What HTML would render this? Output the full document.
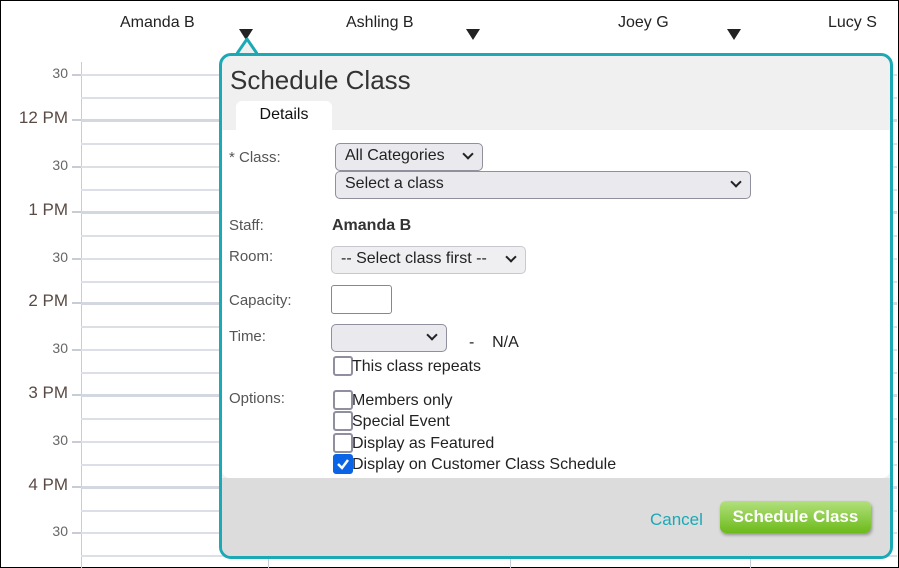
<!DOCTYPE html><html><head><style>
body{margin:0;width:899px;height:568px;overflow:hidden;font-family:"Liberation Sans",sans-serif;background:#fff;position:relative}
.a{position:absolute}
.frame{left:0;top:0;width:897px;height:566px;border:1px solid #000}
.hd{top:14px;font-size:16px;color:#222}
.tri{width:0;height:0;border-left:7px solid transparent;border-right:7px solid transparent;border-top:11px solid #222;top:29px}
.hl{left:81px;width:816px;height:2px;background:#dcdfe6}
.hh{height:3px;background:#d3d7df}
.tk{left:72px;width:9px;height:2px;background:#c8ccd5}
.tl{font-size:14px;color:#666;width:68px;text-align:right;left:0}
.tb{font-size:17px;color:#5a4a45}
.vl{top:62px;width:1px;height:506px;background:#c8ccd5}
.modal{left:219px;top:53px;width:668px;height:500px;border:3px solid #1ba9b6;border-radius:12px;background:#f0f0f0;overflow:hidden}
.lab{font-size:15px;color:#555;left:7px}
.sel{background:#e9e9ee;border:1px solid #8f8f9d;border-radius:5px;font-size:16px;color:#222;box-sizing:border-box;padding:3px 9px}
.chev{position:absolute;right:10px;top:6px;width:6px;height:6px;border-right:2px solid #222;border-bottom:2px solid #222;transform:rotate(45deg)}
.cb{width:16px;height:16px;border:2px solid #8f8f9d;border-radius:3px;background:#fff;left:111px}
.ct{font-size:16px;color:#222;left:130px}
</style></head><body>
<div class="a frame"></div>
<div class="a hd" style="left:120px">Amanda B</div>
<div class="a hd" style="left:346px">Ashling B</div>
<div class="a hd" style="left:618px">Joey G</div>
<div class="a hd" style="left:828px">Lucy S</div>
<div class="a tri" style="left:239px"></div>
<div class="a tri" style="left:466px"></div>
<div class="a tri" style="left:727px"></div>
<div class="a vl" style="left:81px"></div>
<div class="a vl" style="left:268px"></div>
<div class="a vl" style="left:510px"></div>
<div class="a vl" style="left:750px"></div>
<div class="a hl" style="top:74px"></div><div class="a tk" style="top:74px"></div><div class="a tl" style="top:65px">30</div>
<div class="a hl" style="top:97px"></div>
<div class="a hl hh" style="top:119px"></div><div class="a tk" style="top:119px"></div><div class="a tl tb" style="top:108px">12 PM</div>
<div class="a hl" style="top:143px"></div>
<div class="a hl" style="top:166px"></div><div class="a tk" style="top:166px"></div><div class="a tl" style="top:157px">30</div>
<div class="a hl" style="top:189px"></div>
<div class="a hl hh" style="top:211px"></div><div class="a tk" style="top:211px"></div><div class="a tl tb" style="top:200px">1 PM</div>
<div class="a hl" style="top:235px"></div>
<div class="a hl" style="top:258px"></div><div class="a tk" style="top:258px"></div><div class="a tl" style="top:249px">30</div>
<div class="a hl" style="top:281px"></div>
<div class="a hl hh" style="top:302px"></div><div class="a tk" style="top:302px"></div><div class="a tl tb" style="top:291px">2 PM</div>
<div class="a hl" style="top:326px"></div>
<div class="a hl" style="top:349px"></div><div class="a tk" style="top:349px"></div><div class="a tl" style="top:340px">30</div>
<div class="a hl" style="top:372px"></div>
<div class="a hl hh" style="top:394px"></div><div class="a tk" style="top:394px"></div><div class="a tl tb" style="top:383px">3 PM</div>
<div class="a hl" style="top:418px"></div>
<div class="a hl" style="top:441px"></div><div class="a tk" style="top:441px"></div><div class="a tl" style="top:432px">30</div>
<div class="a hl" style="top:464px"></div>
<div class="a hl hh" style="top:486px"></div><div class="a tk" style="top:486px"></div><div class="a tl tb" style="top:475px">4 PM</div>
<div class="a hl" style="top:510px"></div>
<div class="a hl" style="top:532px"></div><div class="a tk" style="top:532px"></div><div class="a tl" style="top:523px">30</div>
<div class="a hl" style="top:555px"></div>
<svg class="a" style="left:236px;top:38px" width="22" height="18"><path d="M0 17 L11 1 L22 17" fill="#f0f0f0" stroke="#1ba9b6" stroke-width="3"/></svg>
<div class="a modal">
 <div class="a" style="left:8px;top:9px;font-size:26px;color:#333">Schedule Class</div>
 <div class="a" style="left:14px;top:45px;width:96px;height:30px;background:#fff;border-radius:6px 6px 0 0;font-size:16px;color:#111;text-align:center;line-height:28px">Details</div>
 <div class="a" style="left:0;top:74px;width:668px;height:348px;background:#fff;border-radius:0 0 8px 8px"></div>
 <div class="a" style="left:0;top:422px;width:668px;height:78px;background:#dcdcdc"></div>
 <div class="a lab" style="top:93px">* Class:</div>
 <div class="a sel" style="left:113px;top:87px;width:148px;height:28px">All Categories<span class="chev"></span></div>
 <div class="a sel" style="left:113px;top:115px;width:416px;height:28px">Select a class<span class="chev"></span></div>
 <div class="a lab" style="top:161px">Staff:</div>
 <div class="a" style="left:110px;top:161px;font-size:16px;font-weight:bold;color:#333">Amanda B</div>
 <div class="a lab" style="top:192px">Room:</div>
 <div class="a sel" style="left:109px;top:190px;width:195px;height:28px;background:#efeff2;border-color:#c8c8d0">-- Select class first --<span class="chev"></span></div>
 <div class="a lab" style="top:236px">Capacity:</div>
 <div class="a" style="left:109px;top:229px;width:59px;height:27px;border:1px solid #888;border-radius:3px;background:#fff"></div>
 <div class="a lab" style="top:272px">Time:</div>
 <div class="a sel" style="left:109px;top:268px;width:116px;height:28px"><span class="chev"></span></div>
 <div class="a" style="left:247px;top:278px;font-size:16px;color:#222">-&nbsp;&nbsp;&nbsp;&nbsp;N/A</div>
 <div class="a cb" style="top:300px"></div><div class="a ct" style="top:302px">This class repeats</div>
 <div class="a lab" style="top:334px">Options:</div>
 <div class="a cb" style="top:334px"></div><div class="a ct" style="top:336px">Members only</div>
 <div class="a cb" style="top:355px"></div><div class="a ct" style="top:357px">Special Event</div>
 <div class="a cb" style="top:377px"></div><div class="a ct" style="top:379px">Display as Featured</div>
 <div class="a cb" style="top:398px;background:#0b63e5;border-color:#0b63e5"><svg width="16" height="16" style="position:absolute;left:0;top:0"><path d="M3 8 L7 12 L13 4" fill="none" stroke="#fff" stroke-width="2.5"/></svg></div><div class="a ct" style="top:400px">Display on Customer Class Schedule</div>
 <div class="a" style="left:428px;top:454px;font-size:17px;color:#1ba9b6">Cancel</div>
 <div class="a" style="left:498px;top:445px;width:151px;height:32px;border-radius:6px;background:linear-gradient(#b2e07d,#6cba1a);box-shadow:1px 2px 3px rgba(0,0,0,.35);color:#fff;font-weight:bold;font-size:17px;text-align:center;line-height:32px">Schedule Class</div>
</div>
</body></html>
